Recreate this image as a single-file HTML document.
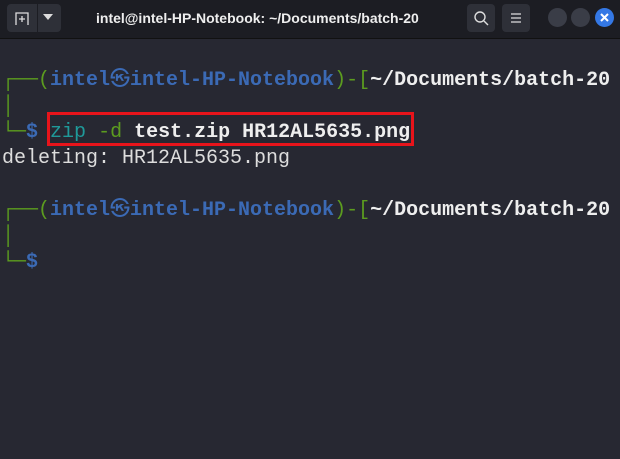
<!DOCTYPE html>
<html><head><style>
*{margin:0;padding:0;box-sizing:border-box}
body{width:620px;height:459px;background:#272832;overflow:hidden;position:relative;font-family:"Liberation Mono","Noto Sans CJK JP",monospace}
.tb{position:absolute;left:0;top:0;width:620px;height:39px;background:#1c1d23;border-bottom:1px solid #111}
.btn{position:absolute;background:#2e3038;border-radius:4px}
.title{position:absolute;left:96px;top:10px;color:#eee;font:bold 14px "Liberation Sans",sans-serif}
.c{position:absolute;top:8px;width:19px;height:19px;border-radius:50%;background:#3a3d47}
.t{position:absolute;left:2px;font-size:20px;white-space:pre;line-height:26px}
.g{color:#5c9c1f}.b{color:#3b6ab5;font-weight:bold}.w{color:#eee;font-weight:bold}.cy{color:#1f9a9a}.n{color:#ddd}
</style></head><body>
<div class="tb">
<div class="btn" style="left:7px;top:4px;width:54px;height:28px"></div>
<div style="position:absolute;left:37px;top:4px;width:1px;height:28px;background:#1c1d23"></div>
<svg style="position:absolute;left:14px;top:10px" width="16" height="16"><path d="M2 15V3h12v12M5 9h6M8 6v6" stroke="#ddd" fill="none" stroke-width="1.3"/></svg>
<svg style="position:absolute;left:43px;top:14px" width="10" height="6"><path d="M0 0h10L5 6z" fill="#ddd"/></svg>
<div class="title">intel@intel-HP-Notebook: ~/Documents/batch-20</div>
<div class="btn" style="left:467px;top:4px;width:28px;height:28px"></div>
<svg style="position:absolute;left:473px;top:10px" width="16" height="16"><circle cx="7" cy="7" r="5" stroke="#ddd" fill="none" stroke-width="1.4"/><path d="M11 11l4 4" stroke="#ddd" stroke-width="1.4"/></svg>
<div class="btn" style="left:502px;top:4px;width:28px;height:28px"></div>
<svg style="position:absolute;left:510px;top:12px" width="12" height="12"><path d="M1 2h10M1 6h10M1 10h10" stroke="#ddd" stroke-width="1.2"/></svg>
<div class="c" style="left:548px"></div><div class="c" style="left:571px"></div>
<div class="c" style="left:595px;background:#3478e5"></div>
<svg style="position:absolute;left:600px;top:13px" width="9" height="9"><path d="M1 1l7 7M8 1l-7 7" stroke="#fff" stroke-width="2"/></svg>
</div>
<div class="t" style="top:68px"><span class="g">┌──(</span><span class="b">intel㉿intel-HP-Notebook</span><span class="g">)-[</span><span class="w">~/Documents/batch-20</span></div>
<div class="t" style="top:94px"><span class="g">│</span></div>
<div class="t" style="top:120px"><span class="g">└─</span><span class="b">$</span> <span class="cy">zip</span> <span class="g">-d</span> <span class="w">test.zip HR12AL5635.png</span></div>
<div class="t n" style="top:146px">deleting: HR12AL5635.png</div>
<div class="t" style="top:198px"><span class="g">┌──(</span><span class="b">intel㉿intel-HP-Notebook</span><span class="g">)-[</span><span class="w">~/Documents/batch-20</span></div>
<div class="t" style="top:224px"><span class="g">│</span></div>
<div class="t" style="top:250px"><span class="g">└─</span><span class="b">$</span></div>
<div style="position:absolute;left:47px;top:112px;width:367px;height:34px;border:3px solid #e8141b"></div>
</body></html>
